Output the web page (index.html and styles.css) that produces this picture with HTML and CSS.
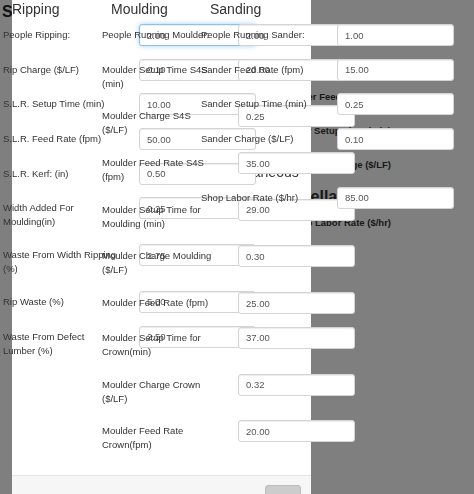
FILE: index.html
```html
<!DOCTYPE html>
<html lang="en">
<head>
<meta charset="utf-8">
<title>Settings</title>
<link rel="stylesheet" href="styles.css">
</head>
<body>
<div class="page">
  <h1 class="page-title">Settings</h1>
  <div class="page-form">
    <div class="page-row">Sander Feed Rate (fpm)</div>
    <div class="page-row">Sander Setup Time (min)</div>
    <div class="page-row">Sander Charge ($/LF)</div>
    <h2 class="page-heading">Miscellaneous</h2>
    <div class="page-row">Shop Labor Rate ($/hr)</div>
  </div>
</div>

<div class="backdrop"></div>

<div class="modal">
  <div class="modal-body">
    <div class="col">
      <section class="section">
        <h4 class="section-title">Ripping</h4>
        <div class="field"><label>People Ripping:</label><input class="is-focused" type="text" value="2.00"></div>
        <div class="field"><label>Rip Charge ($/LF)</label><input type="text" value="0.10"></div>
        <div class="field"><label>S.L.R. Setup Time (min)</label><input type="text" value="10.00"></div>
        <div class="field"><label>S.L.R. Feed Rate (fpm)</label><input type="text" value="50.00"></div>
        <div class="field"><label>S.L.R. Kerf: (in)</label><input type="text" value="0.50"></div>
        <div class="field"><label>Width Added For Moulding(in)</label><input type="text" value="0.25"></div>
        <div class="field"><label>Waste From Width Ripping (%)</label><input type="text" value="2.75"></div>
        <div class="field"><label>Rip Waste (%)</label><input type="text" value="5.00"></div>
        <div class="field"><label>Waste From Defect Lumber (%)</label><input type="text" value="2.50"></div>
      </section>
    </div>
    <div class="col">
      <section class="section">
        <h4 class="section-title">Moulding</h4>
        <div class="field"><label>People Running Moulder:</label><input type="text" value="2.00"></div>
        <div class="field"><label>Moulder Setup Time S4S (min)</label><input type="text" value="20.00"></div>
        <div class="field"><label>Moulder Charge S4S ($/LF)</label><input type="text" value="0.25"></div>
        <div class="field"><label>Moulder Feed Rate S4S (fpm)</label><input type="text" value="35.00"></div>
        <div class="field"><label>Moulder Setup Time for Moulding (min)</label><input type="text" value="29.00"></div>
        <div class="field"><label>Moulder Charge Moulding ($/LF)</label><input type="text" value="0.30"></div>
        <div class="field"><label>Moulder Feed Rate (fpm)</label><input type="text" value="25.00"></div>
        <div class="field"><label>Moulder Setup Time for Crown(min)</label><input type="text" value="37.00"></div>
        <div class="field"><label>Moulder Charge Crown ($/LF)</label><input type="text" value="0.32"></div>
        <div class="field"><label>Moulder Feed Rate Crown(fpm)</label><input type="text" value="20.00"></div>
      </section>
    </div>
    <div class="col">
      <section class="section">
        <h4 class="section-title">Sanding</h4>
        <div class="field"><label>People Running Sander:</label><input type="text" value="1.00"></div>
        <div class="field"><label>Sander Feed Rate (fpm)</label><input type="text" value="15.00"></div>
        <div class="field"><label>Sander Setup Time (min)</label><input type="text" value="0.25"></div>
        <div class="field"><label>Sander Charge ($/LF)</label><input type="text" value="0.10"></div>
      </section>
      <section class="section">
        <h4 class="section-title">Miscellaneous</h4>
        <div class="field"><label>Shop Labor Rate ($/hr)</label><input type="text" value="85.00"></div>
      </section>
    </div>
  </div>
  <div class="modal-footer">
    <button class="btn" type="button">Save</button>
  </div>
</div>
</body>
</html>
```

FILE: styles.css
```css
html, body {
  margin: 0;
  padding: 0;
}

body {
  background: #ffffff;
  color: #333333;
  font-family: "Liberation Sans", Arial, sans-serif;
  font-size: 9.5px;
  overflow: hidden;
}

/* underlying page */
.page {
  padding-left: 2px;
}

.page-title {
  margin: 0;
  font-size: 16px;
  line-height: 24px;
  font-weight: bold;
  color: #222222;
}

.page-form {
  width: 389px;
  margin-top: 56px;
  text-align: right;
}

.page-row {
  height: 34px;
  line-height: 33px;
  font-size: 9.5px;
  font-weight: bold;
  white-space: nowrap;
}

.page-heading {
  margin: 4px 0 -2px;
  padding-left: 273px;
  text-align: left;
  font-size: 16px;
  line-height: 22px;
  font-weight: bold;
  white-space: nowrap;
}

/* overlay */
.backdrop {
  position: fixed;
  inset: 0;
  background: rgba(0, 0, 0, 0.5);
}

.modal {
  position: fixed;
  left: 12px;
  top: 0;
  width: 299px;
  height: 494px;
  background: #ffffff;
  display: flex;
  flex-direction: column;
}

.modal-body {
  flex: 1 1 auto;
  min-height: 0;
  display: grid;
  grid-template-columns: repeat(3, 99px);
  align-items: start;
}

.col {
  min-width: 0;
}

.section + .section {
  margin-top: 2px;
}

.section-title {
  margin: 0 0 6px;
  font-size: 14px;
  line-height: 18px;
  font-weight: normal;
  color: #333333;
  white-space: nowrap;
}

.field {
  position: relative;
  display: flex;
  align-items: flex-start;
  width: 253px;
  margin-left: -9px;
  margin-bottom: 12.7px;
}

.field label {
  flex: none;
  width: 115px;
  margin-right: 21px;
  padding: 4px 0 2px;
  line-height: 14px;
  font-size: 9.5px;
  color: #333333;
}

.field input {
  flex: none;
  box-sizing: border-box;
  width: 117px;
  height: 22px;
  margin: 0;
  padding: 0 7px;
  border: 1px solid #d4d4d4;
  border-radius: 3px;
  background: #ffffff;
  box-shadow: inset 0 1px 1px rgba(0, 0, 0, 0.075);
  font-family: "Liberation Sans", Arial, sans-serif;
  font-size: 9.5px;
  color: #555555;
  outline: none;
}

.field input.is-focused {
  border-color: #8cc2ee;
  box-shadow: inset 0 1px 1px rgba(0, 0, 0, 0.075), 0 0 5px rgba(102, 175, 233, 0.6);
}

.modal-footer {
  flex: none;
  box-sizing: border-box;
  height: 19px;
  padding: 9px 10px 0;
  border-top: 1px solid #e5e5e5;
  background: #f6f6f6;
  text-align: right;
}

.btn {
  width: 36px;
  height: 24px;
  padding: 0;
  border: 1px solid #bdbdbd;
  border-radius: 3px;
  background: #cccccc;
  color: #333333;
  font-family: "Liberation Sans", Arial, sans-serif;
  font-size: 9.5px;
  line-height: 22px;
  vertical-align: top;
}
```
